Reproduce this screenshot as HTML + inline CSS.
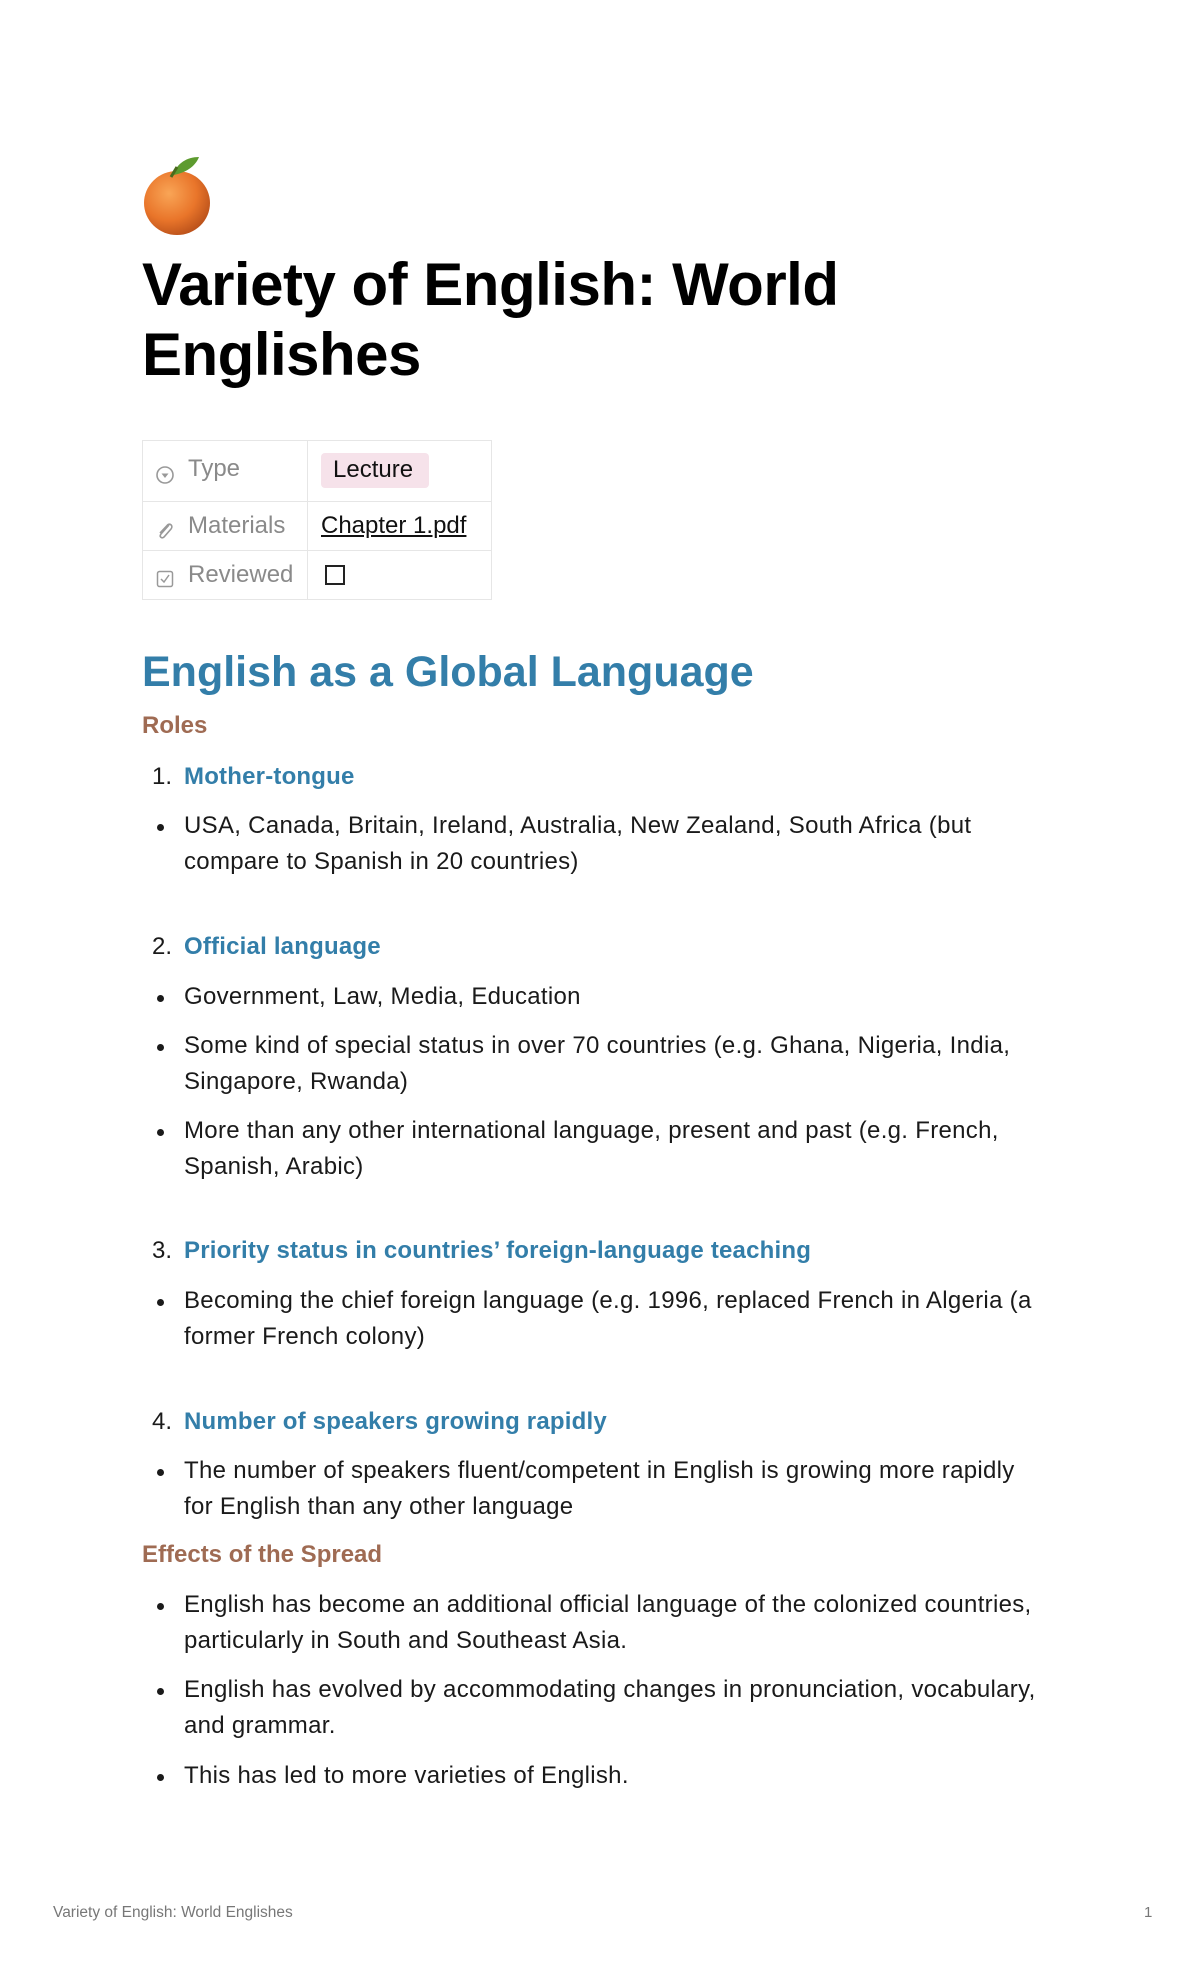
<!DOCTYPE html>
<html><head><meta charset="utf-8"><style>
html,body{margin:0;padding:0;background:#fff}
body{width:1200px;height:1976px;position:relative;overflow:hidden;font-family:"Liberation Sans",Arial,sans-serif;color:#1a1a1a}
.a{position:absolute;white-space:nowrap}
.t{font-size:60px;font-weight:bold;color:#000;line-height:72px;left:142px;letter-spacing:-0.5px}
.b{font-size:24px;line-height:36px;left:184px;letter-spacing:0.3px}
.dot{position:absolute;left:157px;width:7px;height:7px;border-radius:50%;background:#1a1a1a}
.n{font-size:24px;line-height:36px;left:152px}
.nb{font-size:24px;line-height:36px;left:184px;color:#337ea9;font-weight:bold;letter-spacing:0.2px}
.h3{font-size:24px;line-height:36px;left:142px;color:#9f6b53;font-weight:bold}
.cell{position:absolute;border:1px solid #e6e6e6}
.lab{font-size:24px;color:#8a8a8a;line-height:36px}
</style></head><body>
<svg class="a" style="left:143px;top:153px" width="72" height="84" viewBox="0 0 72 84">
<defs><radialGradient id="g" cx="0.38" cy="0.35" r="0.7"><stop offset="0" stop-color="#f9a556"/><stop offset="0.6" stop-color="#e9752a"/><stop offset="1" stop-color="#b9501a"/></radialGradient></defs>
<ellipse cx="34" cy="50" rx="33" ry="32" fill="url(#g)"/>
<path d="M30 22 C34 10 44 4 56 4 C52 14 42 20 30 22Z" fill="#5d9b2f"/>
<path d="M28 24 L34 14" stroke="#4a6b1d" stroke-width="3"/>
</svg>
<div class="a t" style="top:249px">Variety of English: World</div>
<div class="a t" style="top:319px">Englishes</div>

<div class="cell" style="left:142px;top:440px;width:164px;height:60px;border-right:none"></div>
<div class="cell" style="left:307px;top:440px;width:183px;height:60px"></div>
<div class="cell" style="left:142px;top:501px;width:164px;height:49px;border-top:none;border-right:none"></div>
<div class="cell" style="left:307px;top:501px;width:183px;height:49px;border-top:none"></div>
<div class="cell" style="left:142px;top:551px;width:164px;height:48px;border-top:none;border-right:none"></div>
<div class="cell" style="left:307px;top:551px;width:183px;height:48px;border-top:none"></div>
<svg class="a" style="left:155px;top:465px" width="20" height="20" viewBox="0 0 20 20"><circle cx="10" cy="10" r="8" fill="none" stroke="#999" stroke-width="1.6"/><path d="M6.5 8.5 L13.5 8.5 L10 13Z" fill="#999"/></svg>
<div class="a lab" style="left:188px;top:451px">Type</div>
<div class="a" style="left:321px;top:453px;width:108px;height:35px;background:#f6e2ea;border-radius:4px"></div>
<div class="a" style="left:333px;top:452px;font-size:24px;line-height:36px;color:#111">Lecture</div>
<svg class="a" style="left:155px;top:519px" width="20" height="22" viewBox="0 0 20 22"><path d="M14 6 L6 15 C4 17.5 6.5 20 9 18 L16 10 C18.5 7 15 3.5 12.5 6 L5 14" fill="none" stroke="#999" stroke-width="1.6"/></svg>
<div class="a lab" style="left:188px;top:508px">Materials</div>
<div class="a" style="left:321px;top:508px;font-size:24px;line-height:36px;color:#111;text-decoration:underline">Chapter 1.pdf</div>
<svg class="a" style="left:156px;top:570px" width="18" height="18" viewBox="0 0 18 18"><rect x="1.5" y="1.5" width="15" height="15" rx="2" fill="none" stroke="#999" stroke-width="1.5"/><path d="M5 9 L8 12 L13 5" fill="none" stroke="#999" stroke-width="1.5"/></svg>
<div class="a lab" style="left:188px;top:557px">Reviewed</div>
<div class="a" style="left:325px;top:565px;width:20px;height:20px;border:2px solid #222;box-sizing:border-box"></div>

<div class="a" style="left:142px;top:645px;font-size:43px;line-height:54px;color:#337ea9;font-weight:bold">English as a Global Language</div>
<div class="a h3" style="top:708px">Roles</div>

<div class="a n" style="top:759px">1.</div><div class="a nb" style="top:759px">Mother-tongue</div>
<div class="dot" style="top:824px"></div>
<div class="a b" style="top:808px">USA, Canada, Britain, Ireland, Australia, New Zealand, South Africa (but</div>
<div class="a b" style="top:844px">compare to Spanish in 20 countries)</div>

<div class="a n" style="top:929px">2.</div><div class="a nb" style="top:929px">Official language</div>
<div class="dot" style="top:995px"></div>
<div class="a b" style="top:979px">Government, Law, Media, Education</div>
<div class="dot" style="top:1044px"></div>
<div class="a b" style="top:1028px">Some kind of special status in over 70 countries (e.g. Ghana, Nigeria, India,</div>
<div class="a b" style="top:1064px">Singapore, Rwanda)</div>
<div class="dot" style="top:1129px"></div>
<div class="a b" style="top:1113px">More than any other international language, present and past (e.g. French,</div>
<div class="a b" style="top:1149px">Spanish, Arabic)</div>

<div class="a n" style="top:1233px">3.</div><div class="a nb" style="top:1233px">Priority status in countries’ foreign-language teaching</div>
<div class="dot" style="top:1299px"></div>
<div class="a b" style="top:1283px">Becoming the chief foreign language (e.g. 1996, replaced French in Algeria (a</div>
<div class="a b" style="top:1319px">former French colony)</div>

<div class="a n" style="top:1404px">4.</div><div class="a nb" style="top:1404px">Number of speakers growing rapidly</div>
<div class="dot" style="top:1469px"></div>
<div class="a b" style="top:1453px">The number of speakers fluent/competent in English is growing more rapidly</div>
<div class="a b" style="top:1489px">for English than any other language</div>

<div class="a h3" style="top:1537px">Effects of the Spread</div>
<div class="dot" style="top:1603px"></div>
<div class="a b" style="top:1587px">English has become an additional official language of the colonized countries,</div>
<div class="a b" style="top:1623px">particularly in South and Southeast Asia.</div>
<div class="dot" style="top:1688px"></div>
<div class="a b" style="top:1672px">English has evolved by accommodating changes in pronunciation, vocabulary,</div>
<div class="a b" style="top:1708px">and grammar.</div>
<div class="dot" style="top:1774px"></div>
<div class="a b" style="top:1758px">This has led to more varieties of English.</div>

<div class="a" style="left:53px;top:1904px;font-size:15.5px;line-height:18px;color:#777">Variety of English: World Englishes</div>
<div class="a" style="left:1144px;top:1904px;font-size:15px;line-height:18px;color:#777">1</div>
</body></html>
